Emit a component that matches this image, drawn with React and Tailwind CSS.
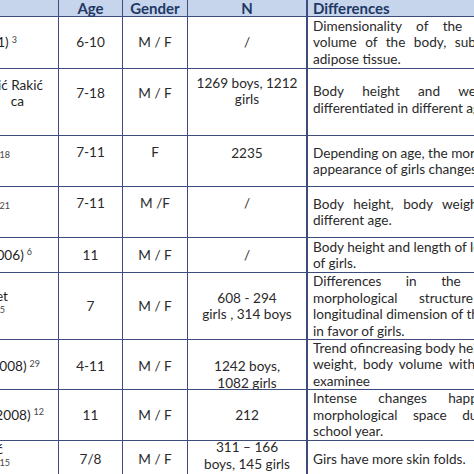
import React from 'react';

// Table of morphological studies (cropped view)
const line = 'border-[#3e4c7c]';

const rows = [
  {
    ref: [{ text: 'Jovanović (2011)', sup: '3', mr: 'mr-[41px]' }],
    refCls: '',
    age: '6-10', gender: 'M / F',
    n: ['/'], nCls: '',
    ageCls: '',
    diff: [
      { t: 'Dimensionality of the', ws: '[word-spacing:11px]' },
      { t: 'volume of the body, subcutaneous', ws: '[word-spacing:5px]' },
      { t: 'adipose tissue.' },
    ],
    diffCls: '',
  },
  {
    ref: [
      { text: 'Bala Stojanović Rakić', mr: 'mr-[15px]' },
      { text: 'ca', mr: 'mr-[34px]' },
    ],
    refCls: 'pb-[18px]',
    age: '7-18', gender: 'M / F',
    ageCls: 'pb-[17px]',
    n: ['1269 boys, 1212', 'girls'], nCls: 'pb-[22px]',
    diff: [
      { t: 'Body height and weight', ws: '[word-spacing:15px]' },
      { t: 'differentiated in different age groups.' },
    ],
    diffCls: 'pb-[5px]',
  },
  {
    ref: [{ text: '', sup: '18', mr: 'mr-[48px]' }],
    refCls: 'pb-[7px]',
    age: '7-11', gender: 'F',
    ageCls: 'pb-[17px]',
    n: ['2235'], nCls: 'pb-[15px]',
    diff: [
      { t: 'Depending on age, the morphological' },
      { t: 'appearance of girls changes.' },
    ],
    diffCls: '',
  },
  {
    ref: [{ text: '', sup: '21', mr: 'mr-[48px]' }],
    refCls: 'pb-[6px]',
    age: '7-11', gender: 'M /F',
    ageCls: 'pb-[17px]',
    n: ['/'], nCls: 'pb-[17px]',
    diff: [
      { t: 'Body height, body weight differ at', ws: '[word-spacing:6px]' },
      { t: 'different age.' },
    ],
    diffCls: '',
  },
  {
    ref: [{ text: 'Petrović (2006)', sup: '6', mr: 'mr-[26px]' }],
    refCls: '',
    age: '11', gender: 'M / F',
    ageCls: '',
    n: ['/'], nCls: '',
    diff: [
      { t: 'Body height and length of legs in favor' },
      { t: 'of girls.' },
    ],
    diffCls: '',
  },
  {
    ref: [
      { text: 'Marković et', mr: 'mr-[50px]' },
      { text: '', sup: '5', mr: 'mr-[53px]' },
    ],
    refCls: 'pb-[4px]',
    age: '7', gender: 'M / F',
    ageCls: '',
    n: ['608 - 294', 'girls , 314 boys'], nCls: '',
    diff: [
      { t: 'Differences in the', ws: '[word-spacing:21px]' },
      { t: 'morphological structure and', ws: '[word-spacing:18px]' },
      { t: 'longitudinal dimension of the body' },
      { t: 'in favor of girls.' },
    ],
    diffCls: '',
  },
  {
    ref: [{ text: 'Stojanović (2008)', sup: '29', mr: 'mr-[18px]' }],
    refCls: 'pt-[4px]',
    age: '4-11', gender: 'M / F',
    ageCls: 'pt-[4px]',
    n: ['1242 boys,', '1082 girls'], nCls: 'pt-[20px]',
    diff: [
      { t: 'Trend ofincreasing body height,' },
      { t: 'weight, body volume with age', ws: '[word-spacing:3px]' },
      { t: 'examinee' },
    ],
    diffCls: '',
  },
  {
    ref: [{ text: 'Bala i Popović (2008)', sup: '12', mr: 'mr-[14px]' }],
    refCls: '',
    age: '11', gender: 'M / F',
    ageCls: '',
    n: ['212'], nCls: '',
    diff: [
      { t: 'Intense changes happen', ws: '[word-spacing:18px]' },
      { t: 'morphological space during', ws: '[word-spacing:12px]' },
      { t: 'school year.' },
    ],
    diffCls: '',
  },
  {
    ref: [
      { text: 'Milošević', mr: 'mr-[55px]' },
      { text: '', sup: '15', mr: 'mr-[48px]' },
    ],
    refCls: 'pb-[6px]',
    age: '7/8', gender: 'M / F',
    ageCls: 'pb-[2px]',
    n: ['311 – 166', 'boys, 145 girls'], nCls: 'pb-[10px]',
    diff: [{ t: 'Girs have more skin folds.' }],
    diffCls: 'pb-[2px]',
  },
];

function RefCell({ lines, cls }) {
  return (
    <div className={`border-r border-b ${line} overflow-hidden flex flex-col justify-center text-[#1f1f1f] ${cls}`}>
      {lines.map((l, i) => (
        <div key={i} className="flex justify-end whitespace-nowrap">
          <span className={l.mr}>
            {l.text}
            {l.sup && (
              <sup className="text-[9px] ml-[3px] text-[#444]">{l.sup}</sup>
            )}
          </span>
        </div>
      ))}
    </div>
  );
}

function CenterCell({ lines, cls }) {
  return (
    <div className={`border-r border-b ${line} flex flex-col justify-center items-center text-center whitespace-nowrap ${cls}`}>
      {lines.map((t, i) => (
        <div key={i}>{t}</div>
      ))}
    </div>
  );
}

export default function App() {
  return (
    <div className="w-[474px] h-[474px] overflow-hidden bg-white font-['Lato','Liberation_Sans',sans-serif] text-[13.6px] leading-[16.5px] text-[#2a2a2a]">
      <div className="grid w-[502px] grid-cols-[59px_64px_65px_119px_195px] grid-rows-[17px_52px_67px_51px_51px_35px_67px_50px_51px_40px]">
        {/* Header */}
        <div className={`bg-[#c6d5ec] border-r border-b ${line}`}></div>
        {['Age', 'Gender', 'N'].map((h) => (
          <div
            key={h}
            className={`bg-[#c6d5ec] border-r border-b ${line} flex items-center justify-center text-[15px] font-bold leading-[16px] text-[#1f3864]`}
          >
            {h}
          </div>
        ))}
        <div className={`bg-[#c6d5ec] border-b border-l ${line} flex items-center pl-[5px] text-[15px] font-bold leading-[16px] text-[#1f3864]`}>
          Differences
        </div>

        {rows.map((r, idx) => (
          <React.Fragment key={idx}>
            <RefCell lines={r.ref} cls={r.refCls} />
            <CenterCell lines={[r.age]} cls={r.ageCls} />
            <CenterCell lines={[r.gender]} cls={r.ageCls} />
            <CenterCell lines={r.n} cls={r.nCls} />
            <div className={`border-b border-l ${line} overflow-hidden flex flex-col justify-center pl-[5px] ${r.diffCls}`}>
              {r.diff.map((d, i) => (
                <div key={i} className={`whitespace-nowrap ${d.ws || ''}`}>
                  {d.t}
                </div>
              ))}
            </div>
          </React.Fragment>
        ))}
      </div>
    </div>
  );
}
